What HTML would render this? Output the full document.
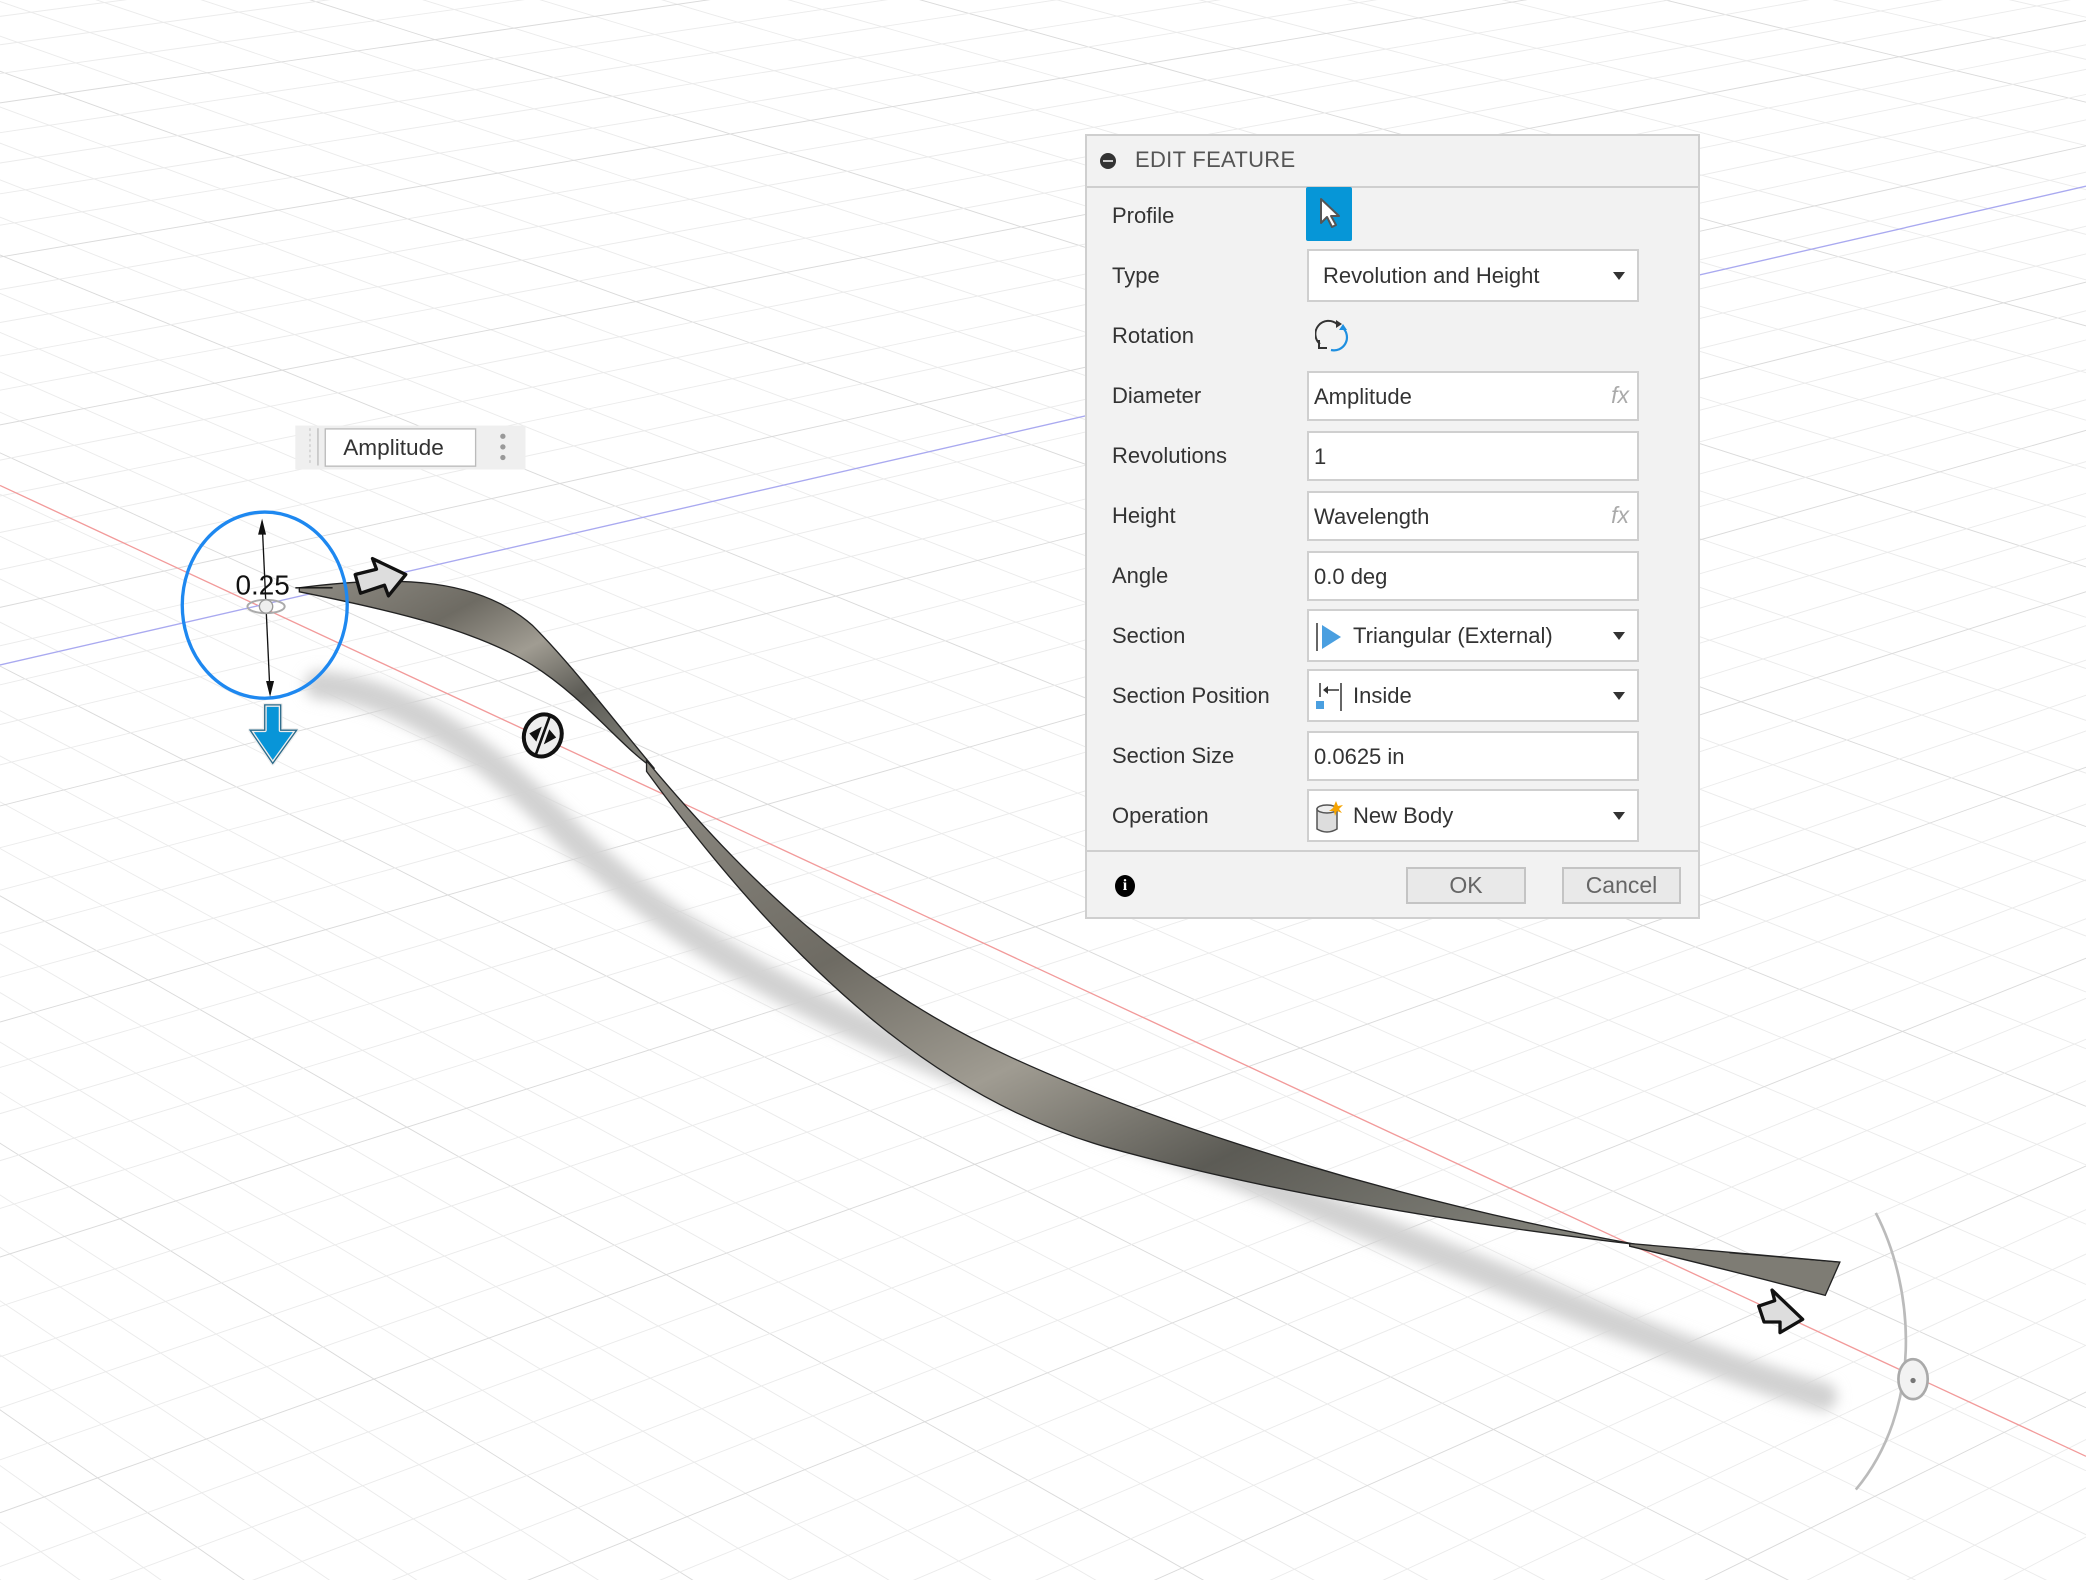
<!DOCTYPE html>
<html><head><meta charset="utf-8">
<style>
html,body{margin:0;padding:0;background:#fff;width:2086px;height:1580px;overflow:hidden;}
body{position:relative;font-family:"Liberation Sans",sans-serif;}
#scene{position:absolute;left:0;top:0;width:2086px;height:1580px;display:block;}
.panel{position:absolute;left:1085px;top:134px;width:615px;height:785px;background:#f2f2f2;border:2px solid #cfcfcf;box-sizing:border-box;}
.hdr{position:absolute;left:0;top:0;right:0;height:50px;border-bottom:2px solid #cfcfcf;}
.hdr .t{position:absolute;left:48px;top:11px;font-size:22px;color:#555;letter-spacing:0.3px;}
.hdr .d{position:absolute;left:13px;top:17px;width:16px;height:16px;border-radius:50%;background:#333;}
.hdr .d:after{content:"";position:absolute;left:3px;top:7px;width:10px;height:2px;background:#ccc;}
.lbl{position:absolute;left:25px;font-size:22px;color:#333;}
.box{position:absolute;left:220px;width:332px;height:50px;background:#fff;border:2px solid #cfcfcf;box-sizing:border-box;font-size:22px;color:#333;}
.box span.v{position:absolute;left:5px;top:11px;}
.box span.fx{position:absolute;right:8px;top:9px;font-style:italic;color:#aaa;font-size:23px;}
.dd span.v{left:14px;}
.dd:after{content:"";position:absolute;right:12px;top:21px;border-left:6px solid transparent;border-right:6px solid transparent;border-top:8px solid #333;}
.ft{position:absolute;left:0;right:0;top:714px;border-top:2px solid #cfcfcf;}
.btn{position:absolute;top:731px;height:37px;border:2px solid #c4c4c4;background:#e9e9e9;box-sizing:border-box;font-size:23px;color:#666;text-align:center;line-height:33px;}
</style></head><body>
<svg id="scene" viewBox="0 0 1568 1188" preserveAspectRatio="none" xmlns="http://www.w3.org/2000/svg">
<defs>
<filter id="blur" x="-20%" y="-20%" width="140%" height="140%"><feGaussianBlur stdDeviation="5"/></filter>
<linearGradient id="rg" x1="0" y1="0" x2="1" y2="1">
<stop offset="0" stop-color="#8f8c84"/><stop offset="0.3" stop-color="#6e6b63"/><stop offset="0.5" stop-color="#a09c92"/><stop offset="0.7" stop-color="#5c5b55"/><stop offset="1" stop-color="#8a8a82"/></linearGradient>
</defs>
<g id="grid"></g>
<line x1="0" y1="365" x2="1568" y2="1095" stroke="#f29a9a" stroke-width="1"/>
<line x1="0" y1="500" x2="1568" y2="140" stroke="#a9a9f0" stroke-width="1"/>
<path d="M240,515 C300,520 360,560 420,620 C500,700 600,760 760,820 C900,870 1050,930 1200,990 C1280,1020 1330,1040 1370,1050" fill="none" stroke="#d2d2d2" stroke-width="22" stroke-linecap="round" filter="url(#blur)"/>
<path d="M225,442 C300,432 360,435 400,470 C430,500 460,540 492,578 C470,565 440,525 400,500 C360,475 300,460 225,445 Z" fill="url(#rg)" stroke="#222" stroke-width="1"/>
<path d="M486,572 C560,660 640,740 760,795 C880,850 1060,905 1232,936 C1080,918 940,893 830,862 C720,830 610,750 486,580 Z" fill="url(#rg)" stroke="#222" stroke-width="1"/>
<path d="M1225,935 C1280,940 1330,944 1383,949 L1372,974 C1320,960 1270,948 1225,937 Z" fill="#7e7c74" stroke="#222" stroke-width="1"/>
<line x1="1300" y1="942" x2="1383" y2="949" stroke="#222" stroke-width="0.8"/>
<ellipse cx="199" cy="455" rx="62" ry="70" fill="none" stroke="#1e88f0" stroke-width="2.5"/>
<line x1="197" y1="392" x2="203" y2="522" stroke="#111" stroke-width="1"/>
<path d="M194,402 L197,390 L200,402 Z M200,512 L203,524 L206,512 Z" fill="#111"/>
<text x="177" y="447" font-family="Liberation Sans,sans-serif" font-size="21" fill="#111">0.25</text>
<line x1="222" y1="442" x2="250" y2="442" stroke="#111" stroke-width="1"/>
<ellipse cx="200" cy="456" rx="14" ry="5" fill="none" stroke="#aaa" stroke-width="1.5"/>
<circle cx="200" cy="456" r="5" fill="#eee" stroke="#999"/>
<path d="M267,432 L283,428 L280,420 L305,432 L292,448 L289,440 L271,446 Z" fill="#ddd" stroke="#111" stroke-width="2.5" stroke-linejoin="round"/>
<path d="M199,530 L211,530 L211,549 L223,549 L205,574 L188,549 L199,549 Z" fill="#0895d8" stroke="#eee" stroke-width="3" stroke-linejoin="round"/>
<path d="M199,530 L211,530 L211,549 L223,549 L205,574 L188,549 L199,549 Z" fill="none" stroke="#2a6a8a" stroke-width="1"/>
<g transform="translate(408,553) rotate(20)"><ellipse rx="14" ry="16" fill="#eee" stroke="#111" stroke-width="3"/><line x1="0" y1="-15" x2="0" y2="15" stroke="#111" stroke-width="2"/><path d="M-3,-6 L-10,2 L-3,6 Z M3,-6 L10,-2 L3,6 Z" fill="#111"/></g>
<path d="M1322,982 L1334,978 L1332,970 L1355,992 L1338,1002 L1338,994 L1326,994 Z" fill="#ddd" stroke="#111" stroke-width="2.5" stroke-linejoin="round"/>
<path d="M1410,912 C1440,970 1445,1060 1395,1120" fill="none" stroke="#bbb" stroke-width="2"/>
<ellipse cx="1438" cy="1037" rx="11" ry="15" fill="#f2f2f2" stroke="#aaa" stroke-width="2"/>
<circle cx="1438" cy="1038" r="2" fill="#777"/>
<rect x="222" y="320" width="173" height="33" fill="#efefef"/>
<line x1="233" y1="322" x2="233" y2="350" stroke="#ccc" stroke-dasharray="2,2"/>
<line x1="239" y1="322" x2="239" y2="350" stroke="#bbb"/>
<rect x="244.5" y="322.5" width="113" height="28" fill="#fff" stroke="#bbb"/>
<text x="258" y="342" font-family="Liberation Sans,sans-serif" font-size="17" fill="#333">Amplitude</text>
<circle cx="378" cy="328" r="2" fill="#999"/><circle cx="378" cy="336" r="2" fill="#999"/><circle cx="378" cy="344" r="2" fill="#999"/>
</svg>

<div class="panel">
<div class="hdr"><div class="d"></div><div class="t">EDIT FEATURE</div></div>
<div class="lbl" style="top:67px">Profile</div>
<div style="position:absolute;left:219px;top:51px;width:46px;height:54px;background:#0696d7;border-radius:2px;">
<svg width="46" height="54"><path d="M15,12 L15,36 L21,30 L26,40 L30,38 L25,29 L33,29 Z" fill="#fff" stroke="#555" stroke-width="2" stroke-linejoin="round"/></svg></div>
<div class="lbl" style="top:127px">Type</div>
<div class="box dd" style="top:113px;height:53px"><span class="v" style="top:12px">Revolution and Height</span></div>
<div class="lbl" style="top:187px">Rotation</div>
<svg style="position:absolute;left:228px;top:182px" width="36" height="36"><path d="M5,26 A13,13 0 0 1 22,6" fill="none" stroke="#333" stroke-width="2"/><path d="M21,2 L27,6 L21,10 Z" fill="#333"/><path d="M4,22 L4,30 L12,30" fill="none" stroke="#333" stroke-width="2"/><path d="M28,10 A13,13 0 0 1 16,32" fill="none" stroke="#1e8fe0" stroke-width="2.2"/><path d="M24,12 L28,6 L32,12 Z" fill="#1e8fe0"/></svg>
<div class="lbl" style="top:247px">Diameter</div>
<div class="box" style="top:235px"><span class="v">Amplitude</span><span class="fx">fx</span></div>
<div class="lbl" style="top:307px">Revolutions</div>
<div class="box" style="top:295px"><span class="v">1</span></div>
<div class="lbl" style="top:367px">Height</div>
<div class="box" style="top:355px"><span class="v">Wavelength</span><span class="fx">fx</span></div>
<div class="lbl" style="top:427px">Angle</div>
<div class="box" style="top:415px"><span class="v">0.0 deg</span></div>
<div class="lbl" style="top:487px">Section</div>
<div class="box dd" style="top:473px;height:53px"><svg style="position:absolute;left:6px;top:10px" width="30" height="32"><line x1="2" y1="2" x2="2" y2="30" stroke="#333" stroke-width="1.5"/><path d="M7,4 L26,16 L7,28 Z" fill="#4a9fe0"/></svg><span class="v" style="left:44px;top:12px">Triangular (External)</span></div>
<div class="lbl" style="top:547px">Section Position</div>
<div class="box dd" style="top:533px;height:53px"><svg style="position:absolute;left:6px;top:10px" width="30" height="32"><line x1="5" y1="2" x2="5" y2="16" stroke="#333" stroke-width="1.5"/><line x1="26" y1="2" x2="26" y2="30" stroke="#333" stroke-width="1.5"/><line x1="10" y1="9" x2="24" y2="9" stroke="#333" stroke-width="1.5"/><path d="M8,9 L13,5 L13,13 Z" fill="#333"/><rect x="1" y="20" width="8" height="8" fill="#4a9fe0"/></svg><span class="v" style="left:44px;top:12px">Inside</span></div>
<div class="lbl" style="top:607px">Section Size</div>
<div class="box" style="top:595px"><span class="v">0.0625 in</span></div>
<div class="lbl" style="top:667px">Operation</div>
<div class="box dd" style="top:653px;height:53px"><svg style="position:absolute;left:5px;top:8px" width="32" height="36"><path d="M3,10 L3,30 Q13,36 23,30 L23,10 Z" fill="#ddd" stroke="#555" stroke-width="1.5"/><ellipse cx="13" cy="10" rx="10" ry="4" fill="#eee" stroke="#555" stroke-width="1.5"/><path d="M22,2 L24,7 L29,6 L25,10 L28,14 L23,12 L21,17 L20,12 L15,12 L19,9 Z" fill="#f5a300"/></svg><span class="v" style="left:44px;top:12px">New Body</span></div>
<div class="ft"></div>
<div style="position:absolute;left:28px;top:739px;width:20px;height:22px;border-radius:50%;background:#000;color:#fff;font-weight:bold;font-size:16px;text-align:center;line-height:22px;font-family:'Liberation Serif',serif;">i</div>
<div class="btn" style="left:319px;width:120px">OK</div>
<div class="btn" style="left:475px;width:119px">Cancel</div>
</div>

<script>
(function(){
var g=document.getElementById('grid'),out='';
function ln(x1,y1,x2,y2,c){out+='<line x1="'+x1+'" y1="'+y1+'" x2="'+x2+'" y2="'+y2+'" stroke="'+c+'" stroke-width="0.7"/>';}
var vax=-3000,vay=-1033;
var y=-900,s=18,i=0;
while(y<4000){ln(vax,vay,1568,y,i%5==0?'#dadada':'#ebebeb');y+=s;s*=1.015;i++;}
var vbx=5000,vby=-650;
y=-300;s=16;i=0;
while(y<3500){ln(0,y,vbx,vby,i%5==0?'#dadada':'#ebebeb');y+=s;s*=1.017;i++;}
g.innerHTML=out;
})();
</script>
</body></html>
